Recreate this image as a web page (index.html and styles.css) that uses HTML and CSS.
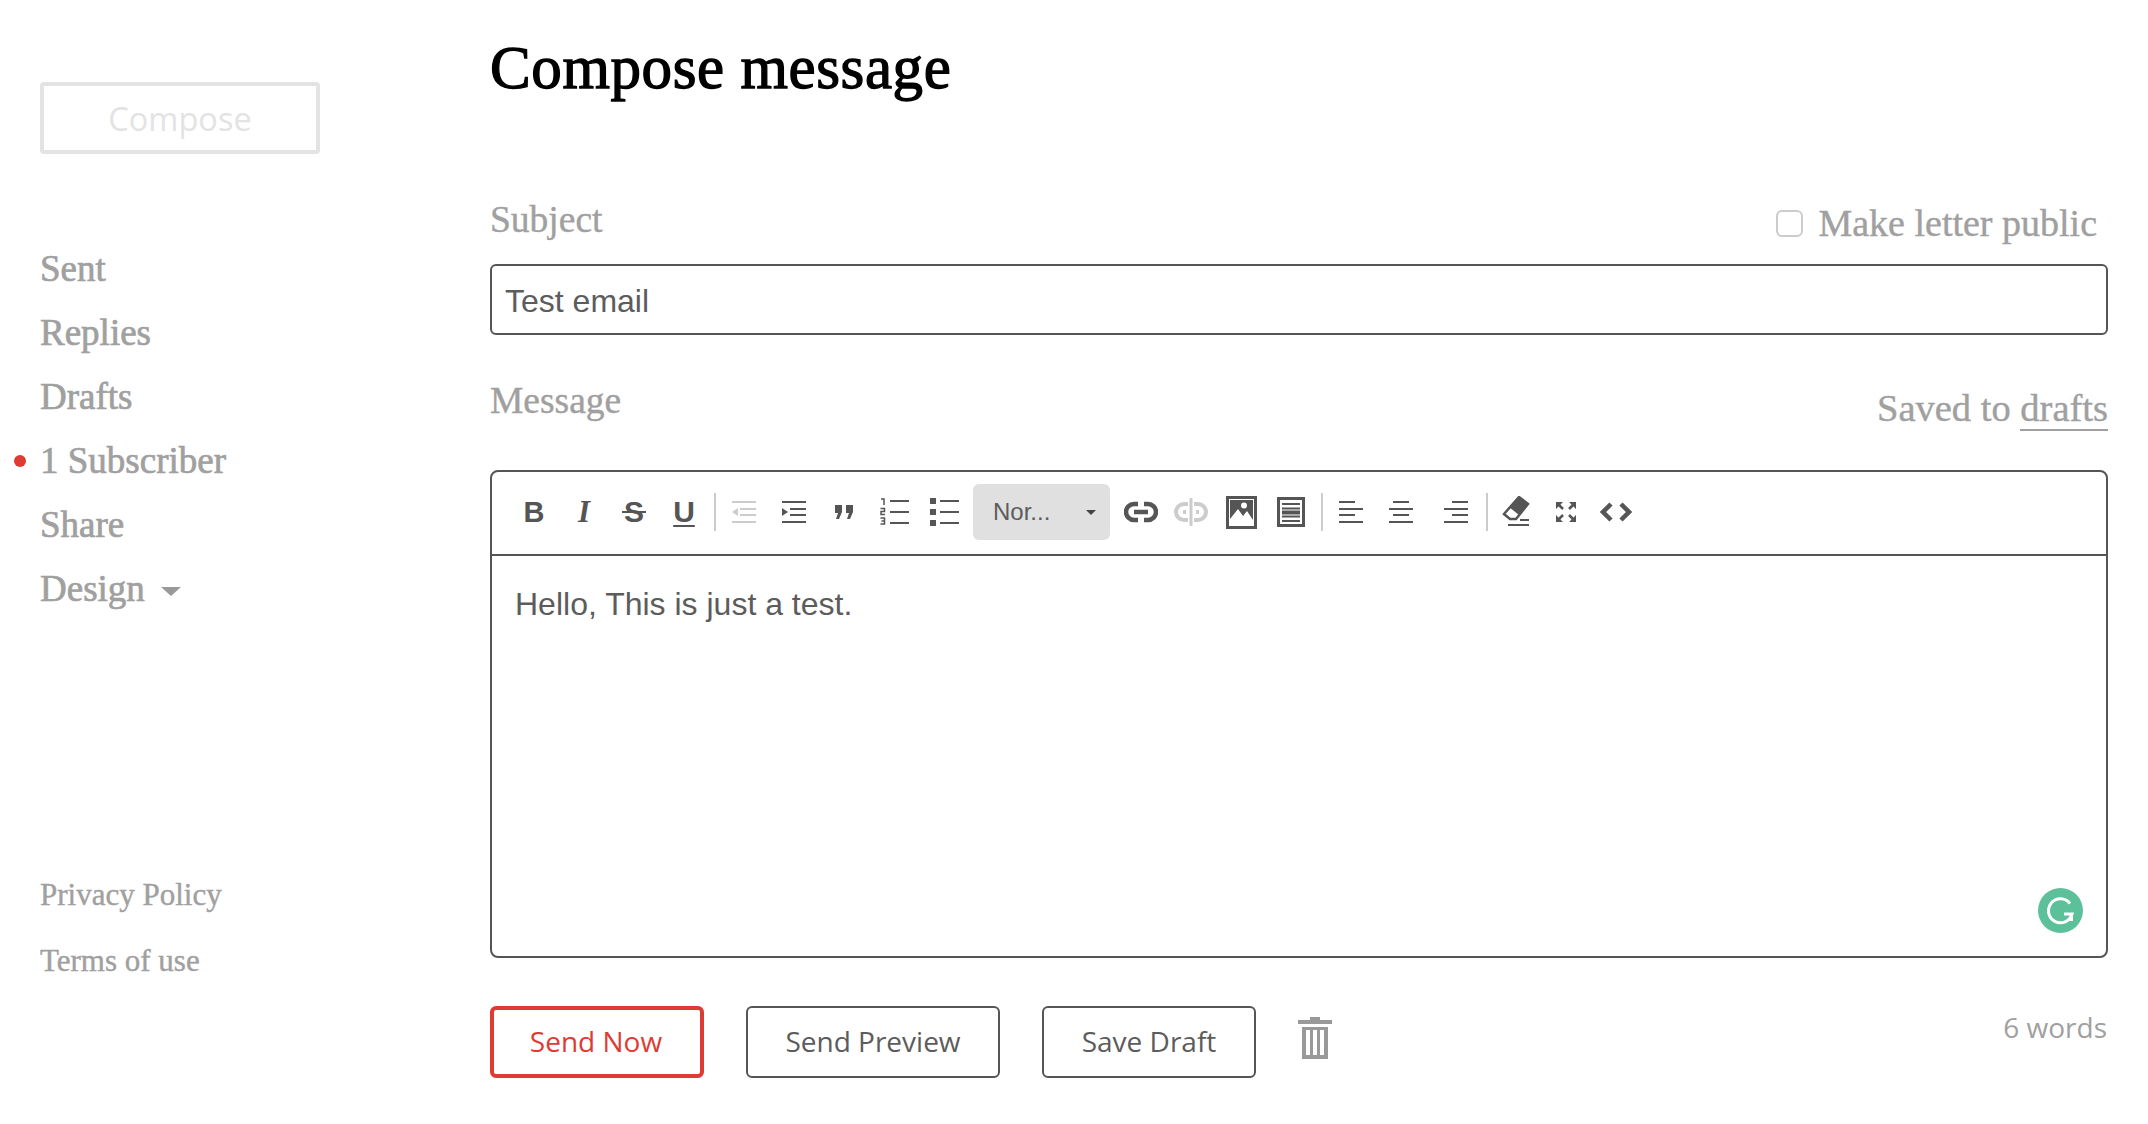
FILE: index.html
```html
<!DOCTYPE html>
<html lang="en">
<head>
<meta charset="utf-8">
<title>Compose message</title>
<link rel="stylesheet" href="styles.css">
</head>
<body>
<div class="page">
  <aside class="sidebar">
    <button class="compose">Compose</button>
    <nav class="nav">
      <a>Sent</a>
      <a>Replies</a>
      <a>Drafts</a>
      <a class="has-dot"><span class="dot"></span>1 Subscriber</a>
      <a>Share</a>
      <a class="design">Design<span class="caret"></span></a>
    </nav>
    <div class="legal">
      <a>Privacy Policy</a>
      <a>Terms of use</a>
    </div>
  </aside>
  <main class="main">
    <h1 class="title">Compose message</h1>
    <div class="row subject-row">
      <span class="label">Subject</span>
      <span class="public"><span class="check"></span>Make letter public</span>
    </div>
    <div class="input">Test email</div>
    <div class="row message-row">
      <span class="label">Message</span>
      <span class="saved">Saved to <span class="drafts">drafts</span></span>
    </div>
    <section class="editor">
      <div class="toolbar">
        <span class="tb tx tb-b">B</span>
        <span class="tb tx tb-i">I</span>
        <span class="tb tx tb-s">S</span>
        <span class="tb tx tb-u">U</span>
        <span class="sep"></span>
        <span class="tb muted"><svg width="26" height="24" viewBox="0 0 26 24"><path d="M1 2h24M9 9h16M9 15h16M1 22h24" stroke="currentColor" stroke-width="2" fill="none"/><path d="M7 8v8l-6-4z" fill="currentColor"/></svg></span>
        <span class="tb"><svg width="26" height="24" viewBox="0 0 26 24"><path d="M1 2h24M9 9h16M9 15h16M1 22h24" stroke="currentColor" stroke-width="2" fill="none"/><path d="M1 8v8l6-4z" fill="currentColor"/></svg></span>
        <span class="tb"><svg width="20" height="16" viewBox="0 0 20 16"><path d="M1 1h7v7l-3 7H2l2-6H1zM12 1h7v7l-3 7h-3l2-6h-3z" fill="currentColor"/></svg></span>
        <span class="tb"><svg width="30" height="30" viewBox="0 0 30 30"><path d="M11 4h19M11 15h19M11 26h19" stroke="currentColor" stroke-width="2" fill="none"/><path d="M2 2h3v6M1.500 11.500h4v3h-3.500v3h4M1.500 21h4v3h-3M2.500 24h3v3h-4" stroke="currentColor" stroke-width="1.500" fill="none"/></svg></span>
        <span class="tb"><svg width="30" height="30" viewBox="0 0 30 30"><path d="M11 4h19M11 15h19M11 26h19" stroke="currentColor" stroke-width="2" fill="none"/><path d="M1 1h6v6H1zM1 12h6v6H1zM1 23h6v6H1z" fill="currentColor"/></svg></span>
        <span class="select"><span>Nor...</span><span class="select-caret"></span></span>
        <span class="tb"><svg width="34" height="22" viewBox="0 0 34 22"><path d="M14 3H10a8 8 0 0 0 0 16h4M20 3h4a8 8 0 0 1 0 16h-4M10 11h14" stroke="currentColor" stroke-width="4.500" fill="none"/></svg></span>
        <span class="tb muted"><svg width="34" height="28" viewBox="0 0 34 28"><path d="M14 6H10a8 8 0 0 0 0 16h4M20 6h4a8 8 0 0 1 0 16h-4M9 14h3M22 14h3" stroke="currentColor" stroke-width="4" fill="none"/><path d="M17 0v28" stroke="currentColor" stroke-width="3"/></svg></span>
        <span class="tb"><svg width="31" height="33" viewBox="0 0 31 33"><path d="M1.500 1.500h28v30h-28z" stroke="currentColor" stroke-width="3" fill="none"/><path d="M4 4h23v20l-6-9-4 5-5-7-8 10z" fill="currentColor"/><circle cx="18" cy="9.500" r="3" fill="#fff"/></svg></span>
        <span class="tb"><svg width="28" height="30" viewBox="0 0 28 30"><path d="M1.500 1.500h25v27h-25z" stroke="currentColor" stroke-width="3" fill="none"/><path d="M5 7h18M5 11.500h18M5 19.500h18M5 24h18" stroke="currentColor" stroke-width="2" fill="none"/><path d="M5 13.500h18v4H5z" fill="currentColor"/></svg></span>
        <span class="sep sep-b"></span>
        <span class="tb"><svg width="26" height="24" viewBox="0 0 26 24"><path d="M1 2h16M1 9h24M1 15h16M1 22h24" stroke="currentColor" stroke-width="2" fill="none"/></svg></span>
        <span class="tb"><svg width="26" height="24" viewBox="0 0 26 24"><path d="M5 2h16M1 9h24M5 15h16M1 22h24" stroke="currentColor" stroke-width="2" fill="none"/></svg></span>
        <span class="tb tb-right"><svg width="26" height="24" viewBox="0 0 26 24"><path d="M9 2h16M1 9h24M9 15h16M1 22h24" stroke="currentColor" stroke-width="2" fill="none"/></svg></span>
        <span class="sep sep-c"></span>
        <span class="tb"><svg width="28" height="32" viewBox="0 0 28 32"><path d="M17 1l9 7-12 15H8l-6-5z" fill="#fff" stroke="currentColor" stroke-width="2.500"/><path d="M17 1l9 7-9 11-10-8z" fill="currentColor"/><path d="M6 29h21M18 24h9" stroke="currentColor" stroke-width="2"/></svg></span>
        <span class="tb"><svg width="22" height="22" viewBox="0 0 22 22"><path d="M1 1h7L1 8zM21 1v7l-7-7zM1 21v-7l7 7zM21 21h-7l7-7z" fill="currentColor"/><path d="M4 4l4 4M18 4l-4 4M4 18l4-4M18 18l-4-4" stroke="currentColor" stroke-width="2.500" fill="none"/></svg></span>
        <span class="tb"><svg width="32" height="20" viewBox="0 0 32 20"><path d="M11 2L3 10l8 8M21 2l8 8-8 8" stroke="currentColor" stroke-width="4.500" fill="none"/></svg></span>
      </div>
      <div class="body">Hello, This is just a test.</div>
      <span class="grammarly"><svg width="28" height="28" viewBox="0 0 28 28"><path d="M23 6.500A12 12 0 1 0 25 17h-8M24.500 17v7" stroke="#fff" stroke-width="3" fill="none"/></svg></span>
    </section>
    <div class="actions">
      <button class="btn btn-send">Send Now</button>
      <button class="btn btn-preview">Send Preview</button>
      <button class="btn btn-draft">Save Draft</button>
      <svg class="trash" width="34" height="42" viewBox="0 0 34 42"><path d="M12 0h10v3h12v4H0V3h12z" fill="currentColor"/><path d="M4 10h26v32H4zM8 13v25h4V13zM15 13v25h4V13zM22 13v25h4V13z" fill="currentColor" fill-rule="evenodd"/></svg>
      <span class="count">6 words</span>
    </div>
  </main>
</div>
</body>
</html>
```

FILE: styles.css
```css
* { box-sizing: border-box; }
html, body { margin: 0; padding: 0; background: #fff; }
.page { display: flex; width: 2148px; height: 1124px; overflow: hidden; font-family: "Liberation Serif", serif; }

.sidebar { width: 490px; padding: 82px 0 0 40px; display: flex; flex-direction: column; flex: none; }
.compose { width: 280px; height: 72px; background: #fff; border: 4px solid #e3e3e3; border-radius: 4px; color: #e3e3e3; font: 32.500px "Open Sans", sans-serif; padding: 0; }
.nav { margin-top: 83px; display: flex; flex-direction: column; }
.nav a { height: 64px; line-height: 64px; font-size: 37px; color: #a0a0a0; position: relative; -webkit-text-stroke: 0.7px #a0a0a0; display: flex; align-items: center; }
.dot { position: absolute; left: -26px; top: 26px; width: 12px; height: 12px; border-radius: 50%; background: #e03a34; }
.caret { margin-left: 16px; margin-top: 4px; width: 0; height: 0; border-left: 10px solid transparent; border-right: 10px solid transparent; border-top: 9px solid #999; }
.legal { margin-top: 241px; display: flex; flex-direction: column; }
.legal a { height: 66px; line-height: 66px; font-size: 31px; color: #a0a0a0; -webkit-text-stroke: 0.4px #a0a0a0; }

.main { width: 1618px; padding-top: 28px; flex: none; }
.title { margin: 0; height: 80px; line-height: 80px; font-size: 61px; font-weight: 400; letter-spacing: 0.600px; color: #000; -webkit-text-stroke: 1.300px #000; }
.row { display: flex; justify-content: space-between; }
.subject-row { margin-top: 82px; height: 74px; }
.label { font-size: 37.500px; line-height: 58px; padding-top: 1px; color: #a0a0a0; -webkit-text-stroke: 0.4px #a0a0a0; }
.public { display: flex; align-items: center; font-size: 38px; line-height: 58px; color: #a0a0a0; padding: 4px 11px 0 0; height: 62px; -webkit-text-stroke: 0.4px #a0a0a0; }
.check { width: 27px; height: 27px; border: 2px solid #ccc; border-radius: 6px; margin-right: 15px; }
.input { height: 71px; border: 2px solid #555; border-radius: 6px; font: 32px/70px "Liberation Sans", sans-serif; color: #5c5c5c; padding-left: 13px; }
.message-row { margin-top: 36px; height: 99px; }
.saved { font-size: 38.500px; line-height: 58px; color: #a0a0a0; height: 52px; padding-top: 8px; box-sizing: content-box; -webkit-text-stroke: 0.4px #a0a0a0; }
.drafts { display: inline-block; height: 52px; border-bottom: 2px solid #a0a0a0; }

.editor { position: relative; height: 488px; border: 2px solid #555; border-radius: 8px; }
.toolbar { display: flex; align-items: center; height: 84px; border-bottom: 2px solid #555; padding: 0 0 2px 17px; color: #555; }
.tb { width: 50px; height: 50px; flex: none; display: flex; align-items: center; justify-content: center; position: relative; }
.tb.muted { color: #ccc; }
.tx { font: 700 29px "Liberation Sans", sans-serif; }
.tb-i { font: italic 700 31px "Liberation Serif", serif; }
.tb-s { font-size: 30px; }
.tb-s::after { content: ""; position: absolute; left: 13px; right: 13px; top: 24px; height: 2px; background: #555; }
.tb-u { font-size: 30px; text-decoration: underline; text-decoration-thickness: 2px; text-underline-offset: 3px; }
.sep { width: 2px; height: 38px; background: #ccc; flex: none; margin: 0 3px 0 5px; }
.select { width: 137px; height: 56px; margin: 0 6px 0 4px; background: #e0e0e0; border-radius: 6px; display: flex; align-items: center; justify-content: space-between; padding: 0 14px 0 20px; font: 24px "Liberation Sans", sans-serif; color: #5c5c5c; flex: none; }
.select-caret { width: 0; height: 0; border-left: 5px solid transparent; border-right: 5px solid transparent; border-top: 5px solid #444; }
.tb-right { margin-left: 5px; }
.body { padding: 27px 23px; font: 32px/42px "Liberation Sans", sans-serif; color: #5c5c5c; }
.grammarly { position: absolute; right: 23px; bottom: 23px; width: 45px; height: 45px; border-radius: 50%; background: #5cc09b; display: flex; align-items: center; justify-content: center; }

.actions { display: flex; align-items: flex-start; margin-top: 48px; position: relative; }
.btn { height: 72px; margin-right: 42px; background: #fff; border: 2px solid #555; border-radius: 6px; color: #5c5c5c; font: 28px "Open Sans", sans-serif; padding: 0 0 2px; }
.btn-send { border: 4px solid #e03a34; color: #e03a34; width: 214px; padding-right: 2px; }
.btn-preview { width: 254px; }
.btn-draft { width: 214px; }
.trash { color: #999; margin-top: 11px; }
.count { margin-left: auto; margin-top: -4px; padding-right: 1px; font: 28px/50px "Open Sans", sans-serif; color: #a0a0a0; }
```
